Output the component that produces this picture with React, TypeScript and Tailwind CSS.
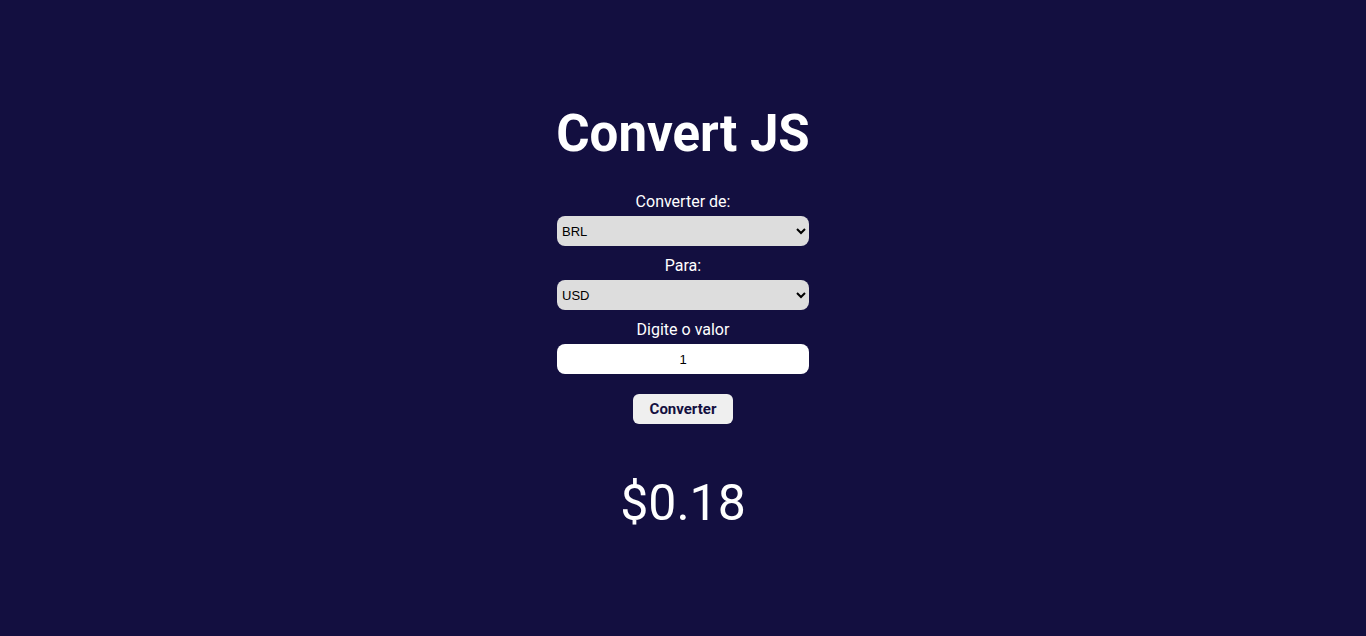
import React, { useState } from "react";

export default function App() {
  const [from, setFrom] = useState("BRL");
  const [to, setTo] = useState("USD");
  const [val, setVal] = useState("1");
  return (
    <div className="min-h-[636px] w-full bg-[#130f40] flex flex-col items-center text-white font-['Roboto',sans-serif]">
      <h1 className="mt-[103px] text-[51px] leading-[61px] font-bold">Convert JS</h1>
      <div className="mt-[28px] flex flex-col items-center w-[252px]">
        <label className="text-[16px] leading-[19px]">Converter de:</label>
        <select
          value={from}
          onChange={(e) => setFrom(e.target.value)}
          className="mt-[5px] w-[252px] h-[30px] rounded-lg bg-[#dddddd] text-black pl-[1px] pr-[2px] text-[13px] font-['Liberation_Sans',Arial,sans-serif]"
        >
          <option>BRL</option>
          <option>USD</option>
          <option>EUR</option>
        </select>
        <label className="mt-[10px] text-[16px] leading-[19px]">Para:</label>
        <select
          value={to}
          onChange={(e) => setTo(e.target.value)}
          className="mt-[5px] w-[252px] h-[30px] rounded-lg bg-[#dddddd] text-black pl-[1px] pr-[2px] text-[13px] font-['Liberation_Sans',Arial,sans-serif]"
        >
          <option>USD</option>
          <option>BRL</option>
          <option>EUR</option>
        </select>
        <label className="mt-[10px] text-[16px] leading-[19px]">Digite o valor</label>
        <input
          value={val}
          onChange={(e) => setVal(e.target.value)}
          className="mt-[5px] w-[252px] h-[30px] rounded-lg bg-white text-black text-center text-[13px] font-['Liberation_Sans',Arial,sans-serif] outline-none"
        />
        <button className="mt-[20px] w-[100px] h-[30px] rounded-md bg-[#efefef] text-[#130f40] text-[15px] font-bold">
          Converter
        </button>
      </div>
      <div className="mt-[50px] text-[50px] leading-[59px]">$0.18</div>
    </div>
  );
}
